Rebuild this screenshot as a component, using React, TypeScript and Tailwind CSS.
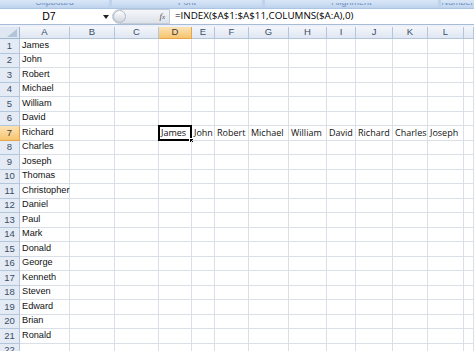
import React from "react";

const cols = ["A", "B", "C", "D", "E", "F", "G", "H", "I", "J", "K", "L", ""];
const widths = [50, 45, 44, 33, 23, 34, 40, 38, 29, 37, 35, 36, 10];
const names = [
  "James", "John", "Robert", "Michael", "William", "David", "Richard", "Charles", "Joseph",
  "Thomas", "Christopher", "Daniel", "Paul", "Mark", "Donald", "George", "Kenneth", "Steven",
  "Edward", "Brian", "Ronald", "",
];
const row7 = ["James", "John", "Robert", "Michael", "William", "David", "Richard", "Charles", "Joseph"];

function Group({ label, w }: { label: string; w: string }) {
  return (
    <div className={`${w} h-[7px] bg-gradient-to-b from-[#d9e6f6] to-[#c3d7f0] rounded-b-[2px] flex items-end justify-center overflow-hidden`}>
      <span className="block h-[4px] overflow-hidden">
        <span className="block -mt-[5px] text-[9px] leading-[9px] text-[#6d8fc0]">{label}</span>
      </span>
    </div>
  );
}

export default function App() {
  return (
    <div className="w-[474px] h-[351px] overflow-hidden bg-white relative" style={{ fontFamily: '"Liberation Sans", Arial, sans-serif' }}>
      {/* ribbon bottom strip */}
      <div className="h-[8px] flex gap-[3px] bg-[#bfd3ec] overflow-hidden">
        <Group label="Clipboard" w="w-[109px]" />
        <Group label="Font" w="w-[150px]" />
        <Group label="Alignment" w="w-[173px]" />
        <Group label="Number" w="flex-1" />
      </div>
      {/* formula bar */}
      <div className="h-[17px] flex items-center border-t border-[#aac4e4] border-b border-b-[#a5bbd9] bg-white">
        <div className="w-[112px] h-full flex items-center relative">
          <span className="flex-1 text-center text-[10.5px] text-black pr-[14px]">D7</span>
          <span className="absolute right-[3px] top-[6px] w-0 h-0 border-l-[3px] border-r-[3px] border-t-[4px] border-l-transparent border-r-transparent border-t-[#222]" />
        </div>
        <div className="w-[58px] h-[15px] flex items-center rounded-l-full bg-gradient-to-b from-[#f4f6f9] to-[#dde2ea] border border-[#c5ccd6] relative">
          <div className="w-[13px] h-[13px] rounded-full bg-gradient-to-b from-[#ffffff] to-[#cfd6df] border border-[#b0b9c6]" />
          <span className="absolute right-[4px] top-[0px] text-[9px] italic text-[#555]" style={{ fontFamily: '"Liberation Serif", serif' }}>
            f<span className="text-[7px]">x</span>
          </span>
        </div>
        <div className="flex-1 pl-[5px] text-[9.8px] text-black whitespace-nowrap" style={{ fontFamily: '"Open Sans", sans-serif' }}>
          =INDEX($A$1:$A$11,COLUMNS($A:A),0)
        </div>
      </div>
      <div className="h-[2px] bg-[#eef2f8]" />
      {/* column headers */}
      <div className="flex h-[12px]">
        <div className="w-[20px] h-full bg-[#dfe7f2] border-r border-b border-[#9eb6ce] relative overflow-hidden">
          <div className="absolute right-[2px] bottom-[1px] w-0 h-0" style={{ borderBottom: "8px solid #b4c4d8", borderLeft: "10px solid transparent" }} />
        </div>
        {cols.map((c, i) => (
          <div
            key={i}
            style={{ width: widths[i] }}
            className={`h-full border-r border-b flex items-center justify-center text-[9.5px] ${
              c === "D"
                ? "bg-gradient-to-b from-[#fbe3b5] to-[#f6c46e] border-[#e5a64a] text-[#3a3a3a]"
                : "bg-gradient-to-b from-[#f3f6fb] to-[#dfe7f2] border-[#b4c6dc] text-[#3c4d66]"
            }`}
          >
            {c}
          </div>
        ))}
      </div>
      {/* rows */}
      {names.map((n, r) => (
        <div key={r} className="flex h-[14.5px]">
          <div
            className={`w-[20px] h-full shrink-0 border-r border-b flex items-center justify-center text-[9.5px] ${
              r === 6
                ? "bg-gradient-to-b from-[#fbe3b5] to-[#f6c46e] border-[#e5a64a] text-[#3a3a3a]"
                : "bg-[#e4ebf5] border-[#b4c6dc] text-[#3c4d66]"
            }`}
          >
            {r + 1}
          </div>
          {widths.map((w, i) => (
            <div
              key={i}
              style={{ width: w }}
              className="h-full shrink-0 border-r border-b border-[#dadfe8] relative flex items-center whitespace-nowrap"
            >
              {i === 0 && n && <span className="pl-[2px] text-[9.2px] text-[#111]">{n}</span>}
              {r === 6 && i >= 3 && i <= 11 && (
                <span className="pl-[2px] text-[9px] text-[#111]" style={{ fontFamily: '"Open Sans", sans-serif' }}>
                  {row7[i - 3]}
                </span>
              )}
              {r === 6 && i === 3 && (
                <>
                  <div className="absolute -left-[1px] -top-[1px] -right-[1px] -bottom-[1px] border-2 border-black" />
                  <div className="absolute -right-[3px] -bottom-[3px] w-[5px] h-[5px] bg-black border border-white" />
                </>
              )}
            </div>
          ))}
        </div>
      ))}
    </div>
  );
}
